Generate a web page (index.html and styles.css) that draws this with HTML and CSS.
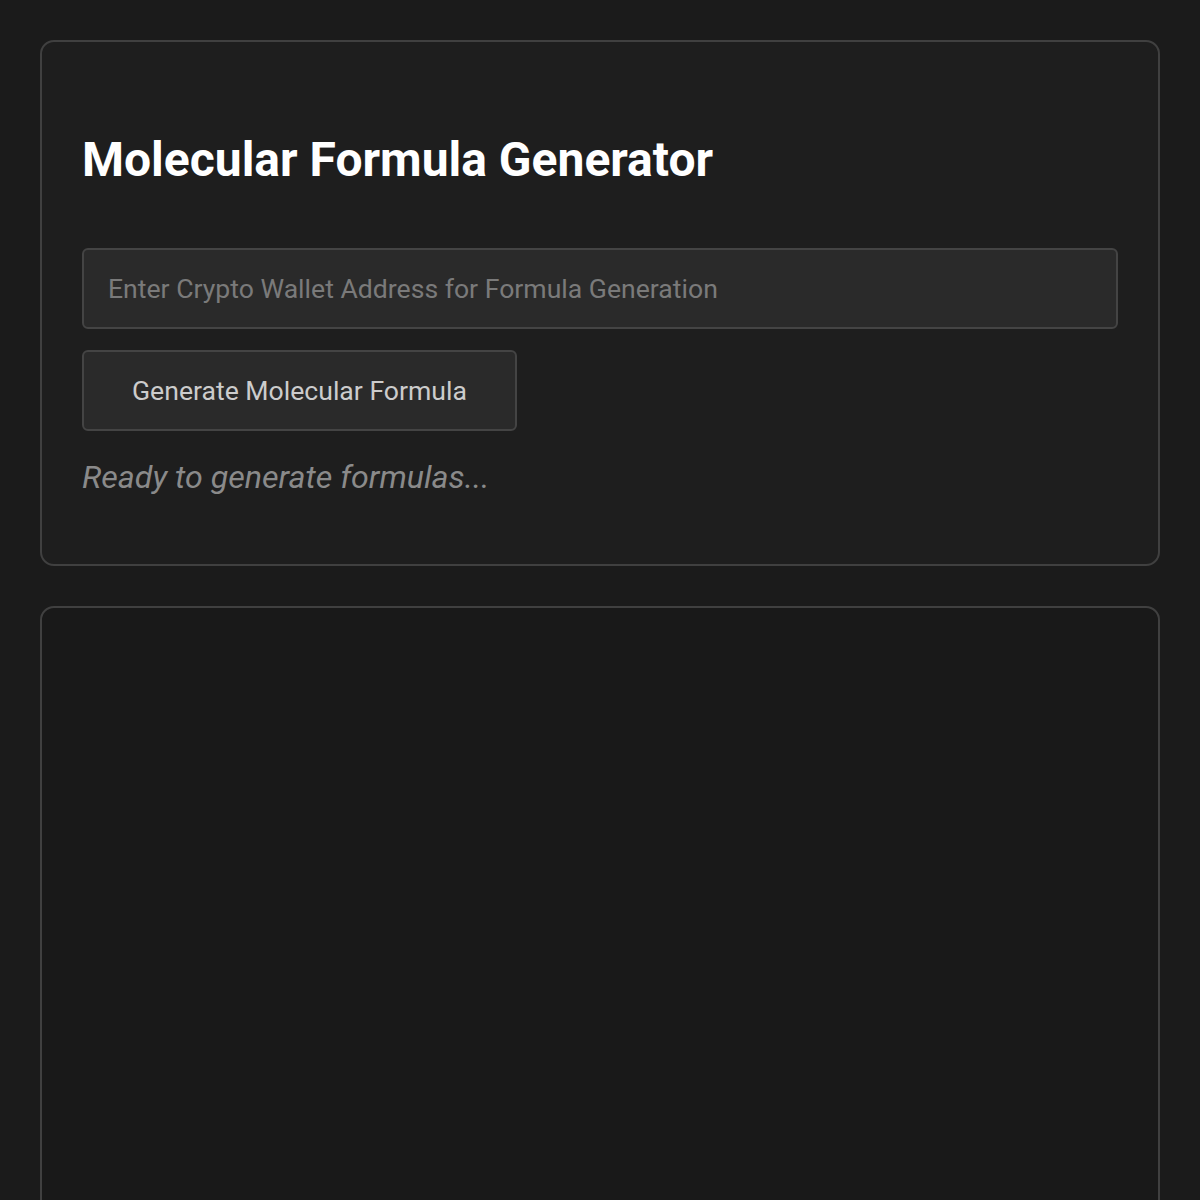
FILE: index.html
```html
<!DOCTYPE html>
<html lang="en">
<head>
<meta charset="utf-8">
<title>Molecular Formula Generator</title>
<link rel="stylesheet" href="styles.css">
</head>
<body>
<main class="page">
  <section class="card card-main">
    <h1 class="title">Molecular Formula Generator</h1>
    <input class="wallet-input" type="text" placeholder="Enter Crypto Wallet Address for Formula Generation">
    <button class="generate-btn" type="button">Generate Molecular Formula</button>
    <p class="status">Ready to generate formulas...</p>
  </section>
  <section class="card card-output"></section>
</main>
</body>
</html>
```

FILE: styles.css
```css
html, body {
  margin: 0;
  padding: 0;
  background: #1b1b1b;
  font-family: Roboto, "Noto Sans", "Liberation Sans", sans-serif;
  color: #ffffff;
}

.page {
  padding: 40px;
  display: flex;
  flex-direction: column;
  gap: 40px;
}

.card {
  border: 2px solid #404040;
  border-radius: 14px;
  padding: 40px;
  box-sizing: border-box;
}

.card-main {
  background: #1e1e1e;
  display: flex;
  flex-direction: column;
  align-items: flex-start;
}

.card-output {
  background: #191919;
  height: 700px;
}

.title {
  font-size: 48px;
  font-weight: 700;
  line-height: 56px;
  margin: 50px 0 60px;
  color: #ffffff;
}

.wallet-input {
  width: 100%;
  box-sizing: border-box;
  height: 81px;
  padding: 0 24px;
  background: #2a2a2a;
  border: 2px solid #444444;
  border-radius: 6px;
  font-family: inherit;
  font-size: 26.6px;
  color: #dddddd;
  outline: none;
}

.wallet-input::placeholder {
  color: #7a7a7a;
}

.generate-btn {
  margin-top: 21px;
  height: 81px;
  padding: 0 48px;
  background: #2a2a2a;
  border: 2px solid #444444;
  border-radius: 6px;
  font-family: inherit;
  font-size: 26.6px;
  color: #cccccc;
  cursor: pointer;
}

.status {
  margin: 28px 0 28px;
  font-size: 32.2px;
  line-height: 37px;
  font-style: italic;
  color: #8a8a8a;
}
```
